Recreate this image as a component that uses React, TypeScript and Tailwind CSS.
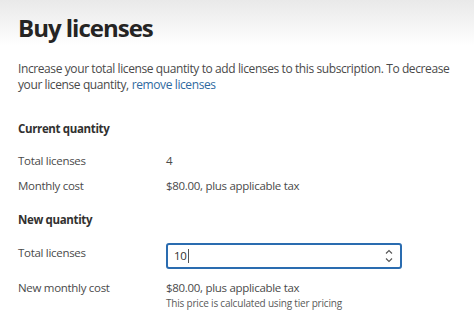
export default function App() {
  return (
    <main
      className="w-[474px] h-[317px] overflow-hidden bg-white text-[#323130]"
      style={{ fontFamily: '"Open Sans", "Noto Sans", sans-serif' }}
    >
      <div className="bg-gradient-to-b from-[#e9e9e9] to-white pl-[18px] pt-[12px] h-[46px]">
        <h1 className="text-[24px] leading-[32px] font-bold text-[#252423] tracking-[-1px]">
          Buy licenses
        </h1>
      </div>
      <div className="px-[18px] mt-[15px] text-[12px] leading-[16px] tracking-[-0.4px] text-[#4a4a4a]">
        <p>Increase your total license quantity to add licenses to this subscription. To decrease</p>
        <p className="flex gap-[3px]">
          <span>your license quantity,</span>
          <span className="text-[#2f6aa0]">remove licenses</span>
        </p>
      </div>

      <h2 className="px-[18px] mt-[28px] text-[11.5px] leading-[16px] font-bold tracking-[-0.35px] text-[#323130]">
        Current quantity
      </h2>
      <div className="px-[18px] mt-[16px] flex text-[11.5px] leading-[16px] tracking-[-0.3px] text-[#4a4a4a]">
        <div className="w-[148px]">Total licenses</div>
        <div>4</div>
      </div>
      <div className="px-[18px] mt-[9px] flex text-[11.5px] leading-[16px] tracking-[-0.3px] text-[#4a4a4a]">
        <div className="w-[148px]">Monthly cost</div>
        <div>$80.00, plus applicable tax</div>
      </div>

      <h2 className="px-[18px] mt-[18px] text-[11.5px] leading-[16px] font-bold tracking-[-0.35px] text-[#323130]">
        New quantity
      </h2>
      <div className="px-[18px] mt-[15px] flex items-start text-[11.5px] leading-[16px] tracking-[-0.3px] text-[#4a4a4a]">
        <div className="w-[148px] pt-[2px]">Total licenses</div>
        <div className="w-[236px] h-[26px] border-2 border-[#2a6cb0] rounded-[3px] flex items-center justify-between pl-[6px] pr-[7px]">
          <span className="flex items-center text-[#323130]">
            10<span className="w-px h-[14px] bg-[#555] ml-px" />
          </span>
          <span className="flex flex-col items-center gap-[4px]">
            <svg width="8" height="5" viewBox="0 0 8 5">
              <path d="M1 4.5 L4 1.5 L7 4.5" fill="none" stroke="#555" strokeWidth="1.1" />
            </svg>
            <svg width="8" height="5" viewBox="0 0 8 5">
              <path d="M1 0.5 L4 3.5 L7 0.5" fill="none" stroke="#555" strokeWidth="1.1" />
            </svg>
          </span>
        </div>
      </div>
      <div className="px-[18px] mt-[11px] flex text-[11.5px] leading-[16px] tracking-[-0.3px] text-[#4a4a4a]">
        <div className="w-[148px]">New monthly cost</div>
        <div>
          <div>$80.00, plus applicable tax</div>
          <div className="text-[10px] leading-[14px] tracking-[-0.2px] text-[#5a5a5a]">
            This price is calculated using tier pricing
          </div>
        </div>
      </div>
    </main>
  )
}
